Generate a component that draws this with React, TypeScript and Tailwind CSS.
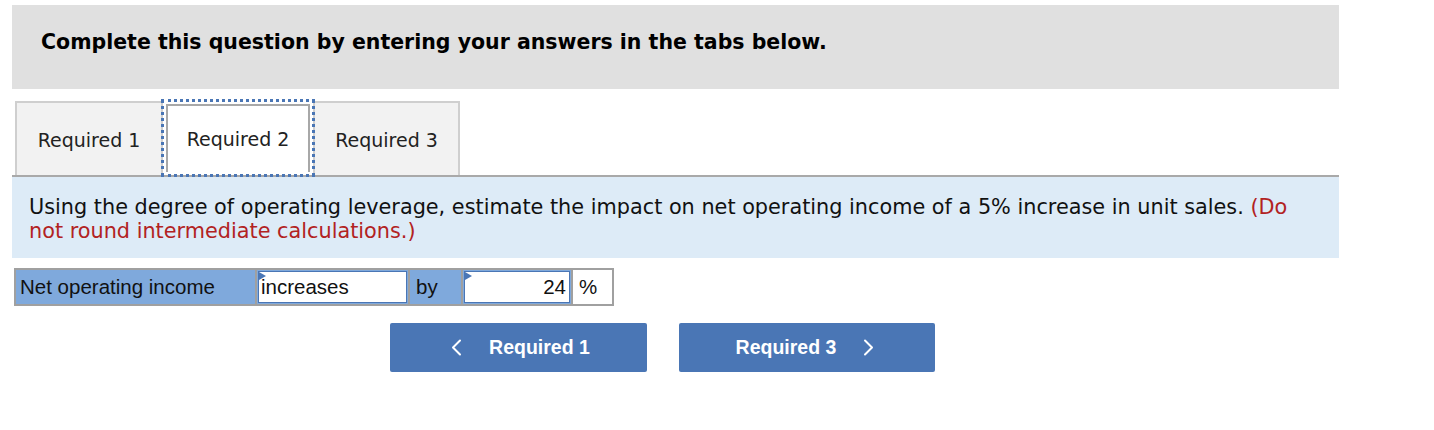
import React from 'react';

const Corner = () => (
  <svg width="7" height="8" viewBox="0 0 7 8" className="absolute left-0 top-0">
    <path d="M0 0 L7 4 L0 8 Z" fill="#4a76b5" />
  </svg>
);

const Chevron = ({ dir }: { dir: 'left' | 'right' }) => (
  <svg width="11" height="17" viewBox="0 0 11 17" fill="none" stroke="white" strokeWidth="2" strokeLinecap="round" strokeLinejoin="round">
    {dir === 'left' ? <path d="M9 1.5 L2 8.5 L9 15.5" /> : <path d="M2 1.5 L9 8.5 L2 15.5" />}
  </svg>
);

export default function App() {
  return (
    <div className="min-h-screen w-full bg-white pl-[12px] pt-[5px]">
      <div className="w-[1327px]">
        {/* Instruction header */}
        <div className="flex h-[84px] items-center bg-[#e0e0e0] pb-[10px] pl-[29px]">
          <h2 className="text-[20.5px] font-bold text-black" style={{ fontFamily: '"DejaVu Sans", Verdana, sans-serif' }}>
            Complete this question by entering your answers in the tabs below.
          </h2>
        </div>

        {/* Tabs */}
        <div className="mt-[12px] flex pl-[3px]" style={{ fontFamily: '"DejaVu Sans", Verdana, sans-serif' }}>
          <div className="flex h-[74px] w-[148px] items-center justify-center border-2 border-b-0 border-[#cfcfcf] bg-[#f2f2f2] pt-[2px] text-[19px] text-[#222]">
            Required 1
          </div>
          <div className="relative flex h-[74px] w-[150px] items-center justify-center bg-white pt-[2px] text-[19px] text-[#222] outline-dotted outline-[3px] outline-[#4a76b5] -outline-offset-[1px]">
            <div className="absolute inset-[3px] border-2 border-b-0 border-[#a8a8a8]" />
            <span className="relative">Required 2</span>
          </div>
          <div className="flex h-[74px] w-[147px] items-center justify-center border-2 border-b-0 border-[#cfcfcf] bg-[#f2f2f2] pt-[2px] text-[19px] text-[#222]">
            Required 3
          </div>
        </div>

        {/* Question panel */}
        <div className="border-t-2 border-[#a9a9a9] bg-[#ddebf7] pl-[17px] pr-[30px] pt-[18px] pb-[15px]">
          <p className="text-[20.8px] leading-[24px] text-[#111]" style={{ fontFamily: '"DejaVu Sans", Verdana, sans-serif' }}>
            Using the degree of operating leverage, estimate the impact on net operating income of a 5% increase in unit sales.{' '}
            <span className="text-[#b22222]">(Do not round intermediate calculations.)</span>
          </p>
        </div>

        {/* Answer row */}
        <div className="ml-[2px] mt-[10px] flex w-[600px] border-2 border-[#a0a0a0] text-[20.5px] text-[#111]" style={{ fontFamily: '"Liberation Sans", Arial, sans-serif' }}>
          <div className="flex h-[34px] w-[241px] items-center border-r-2 border-[#a0a0a0] bg-[#7fa9dc] pl-[4px]">Net operating income</div>
          <div className="relative flex h-[34px] w-[153px] items-center border-r-2 border-[#a0a0a0] bg-[#7fa9dc] p-[1px]">
            <div className="relative flex h-full w-full items-center border border-[#4a76b5] bg-white pl-[2px]">
              <Corner />
              increases
            </div>
          </div>
          <div className="flex h-[34px] w-[53px] items-center border-r-2 border-[#a0a0a0] bg-[#7fa9dc] pl-[6px]">by</div>
          <div className="relative flex h-[34px] w-[110px] items-center border-r-2 border-[#a0a0a0] bg-[#7fa9dc] p-[1px]">
            <div className="relative flex h-full w-full items-center justify-end border border-[#4a76b5] bg-white pr-[3px]">
              <Corner />
              24
            </div>
          </div>
          <div className="flex h-[34px] flex-1 items-center bg-white pl-[6px]">%</div>
        </div>

        {/* Navigation buttons */}
        <div className="ml-[378px] mt-[17px] flex gap-[32px] text-[19.5px] font-bold text-white" style={{ fontFamily: '"Liberation Sans", Arial, sans-serif' }}>
          <button className="flex h-[49px] w-[257px] items-center justify-center gap-[27px] rounded-[2px] bg-[#4a76b5] pl-[4px]">
            <Chevron dir="left" />
            <span>Required 1</span>
          </button>
          <button className="flex h-[49px] w-[256px] items-center justify-center gap-[27px] rounded-[2px] bg-[#4a76b5] pr-[4px]">
            <span>Required 3</span>
            <Chevron dir="right" />
          </button>
        </div>
      </div>
    </div>
  );
}
